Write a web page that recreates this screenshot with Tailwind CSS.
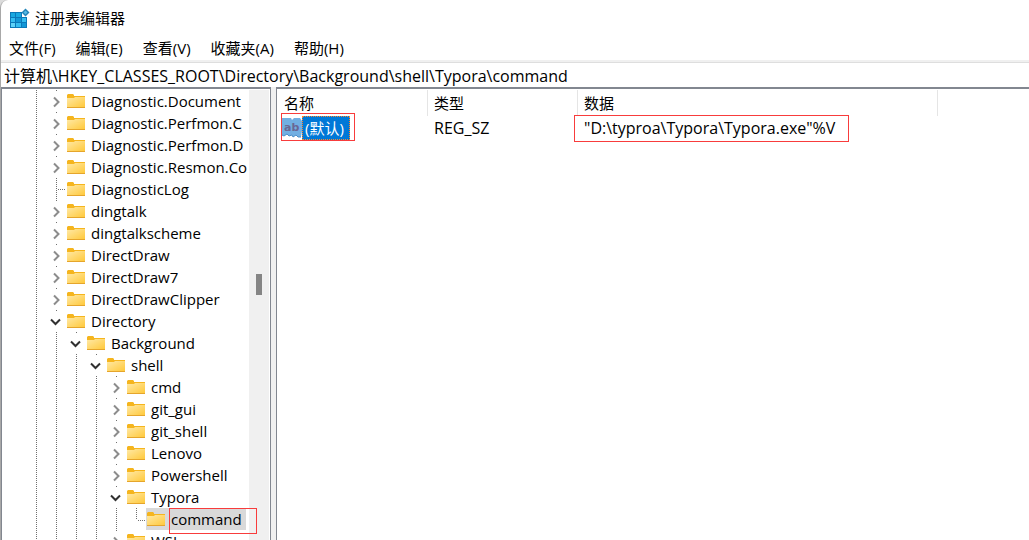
<!DOCTYPE html>
<html lang="zh-CN">

<head>
    <meta charset="UTF-8">
    <meta name="viewport" content="width=device-width, initial-scale=1.0">
    <title>注册表编辑器</title>
    <script src="https://cdn.jsdelivr.net/npm/@tailwindcss/browser@4"></script>
</head>

<body class="h-screen overflow-hidden bg-[#dcdcdc] font-['Open_Sans','Noto_Sans_CJK_SC',sans-serif] text-[15px] text-black">
    <div class="flex h-full flex-col rounded-tl-lg border-l border-[#a8a8a8] bg-white">
        <header class="flex h-9 shrink-0 items-center gap-[5px] pl-2">
            <svg class="size-[21px]" viewBox="0 0 21 21" aria-hidden="true">
                <rect x="1" y="4" width="17" height="16" fill="#0b78b8" />
                <path d="M2 5h4v4H2zM7 5h5v4H7z" fill="#18a8e0" />
                <path d="M2 10h4v4H2zM13 10h4v4h-4zM7 15h5v4H7z" fill="#35bdf0" />
                <path d="M7 10h5v4H7zM13 15h4v4h-4z" fill="#1296d6" />
                <path d="M2 15h4v4H2z" fill="#5fd2f7" />
                <path d="M13 3h6v6h-6z" fill="#fff" />
                <path d="M16.500 .5l4 4-4 4-4-4z" fill="#2384b8" />
                <path d="M16.500 2.500l2 2-2 2-2-2z" fill="#55b9e4" />
            </svg>
            <h1>注册表编辑器</h1>
        </header>

        <nav class="flex h-6 shrink-0 items-center gap-5 pt-px pl-2">
            <button type="button">文件(F)</button>
            <button type="button">编辑(E)</button>
            <button type="button">查看(V)</button>
            <button type="button">收藏夹(A)</button>
            <button type="button">帮助(H)</button>
        </nav>

        <div class="shrink-0 border-t-2 border-[#f0f0f0]">
            <input type="text" aria-label="地址" value="计算机\HKEY_CLASSES_ROOT\Directory\Background\shell\Typora\command"
                class="block h-[25px] w-full border-t border-[#dedede] pb-px pl-[3px] text-base outline-none">
        </div>

        <main class="flex min-h-0 flex-1 bg-[#f0f0f0]">
            <section class="relative flex w-[270px] shrink-0 border-x border-t-2 border-[#828790] bg-white pt-px">
                <ul id="tree" class="min-w-0 flex-1 overflow-hidden pl-6"></ul>
                <!-- scrollbar -->
                <div class="mr-px w-5 shrink-0 bg-[#f0f0f0] px-[7px] pt-[184px]">
                    <div class="h-[21px] bg-[#858585]"></div>
                </div>
                <div class="absolute top-[419px] left-[167px] h-[26px] w-[88px] border border-[#f83c3c]"></div>
            </section>

            <section class="ml-[5px] min-w-0 flex-1 border-t-2 border-l border-[#828790] bg-white pt-px">
                <table class="w-full table-fixed border-separate border-spacing-0 text-left">
                    <colgroup>
                        <col class="w-[151px]">
                        <col class="w-[150px]">
                        <col class="w-[360px]">
                        <col>
                    </colgroup>
                    <thead>
                        <tr class="h-[26px]">
                            <th class="border-r border-[#e5e5e5] p-0 pl-[7px] font-normal">名称</th>
                            <th class="border-r border-[#e5e5e5] p-0 pl-[6px] font-normal">类型</th>
                            <th class="border-r border-[#e5e5e5] p-0 pl-[6px] font-normal">数据</th>
                            <th></th>
                        </tr>
                    </thead>
                    <tbody>
                        <tr class="h-6">
                            <td class="p-0 pl-[5px]">
                                <div class="relative flex items-center">
                                    <svg class="size-5" viewBox="0 0 20 20" aria-hidden="true">
                                        <path d="M0 0h9l1 2 2-2h6l2 3v10l-1 6h-3l-2-2-3 2-1-2-3 1-2-2-3 2-2-1z" fill="#71afe2" />
                                        <path d="M0 17l2 1 3-2 2 2 3-1 1 2 3-2 2 2h3" fill="none" stroke="#4c8fc8" />
                                        <text x="2" y="13" font-family="DejaVu Sans" font-size="11" font-weight="bold" fill="#6a6694">ab</text>
                                    </svg>
                                    <span class="flex h-6 items-center border border-dotted border-[#ff8728] bg-[#0078d7] pr-[5px] pl-[2px] text-white">(默认)</span>
                                    <div class="absolute -top-[3px] -left-px h-[28px] w-[74px] border border-[#f83c3c]"></div>
                                </div>
                            </td>
                            <td class="p-0 pl-[6px] text-base">REG_SZ</td>
                            <td class="p-0 pl-[6px] text-base">
                                <div class="relative">
                                    "D:\typroa\Typora\Typora.exe"%V
                                    <div class="absolute -top-px -left-[10px] h-[27px] w-[275px] border border-[#f83c3c]"></div>
                                </div>
                            </td>
                            <td></td>
                        </tr>
                    </tbody>
                </table>
            </section>
        </main>
    </div>

    <script>
        // level = number of guide lines in front of the node's own cell
        const nodes = [
            { name: 'Diagnostic.Document', level: 1, state: 'closed' },
            { name: 'Diagnostic.Perfmon.C', level: 1, state: 'closed' },
            { name: 'Diagnostic.Perfmon.D', level: 1, state: 'closed' },
            { name: 'Diagnostic.Resmon.Co', level: 1, state: 'closed' },
            { name: 'DiagnosticLog', level: 1, state: 'leaf' },
            { name: 'dingtalk', level: 1, state: 'closed' },
            { name: 'dingtalkscheme', level: 1, state: 'closed' },
            { name: 'DirectDraw', level: 1, state: 'closed' },
            { name: 'DirectDraw7', level: 1, state: 'closed' },
            { name: 'DirectDrawClipper', level: 1, state: 'closed' },
            { name: 'Directory', level: 1, state: 'open' },
            { name: 'Background', level: 2, state: 'open' },
            { name: 'shell', level: 3, state: 'open' },
            { name: 'cmd', level: 4, state: 'closed' },
            { name: 'git_gui', level: 4, state: 'closed' },
            { name: 'git_shell', level: 4, state: 'closed' },
            { name: 'Lenovo', level: 4, state: 'closed' },
            { name: 'Powershell', level: 4, state: 'closed' },
            { name: 'Typora', level: 4, state: 'open' },
            { name: 'command', level: 5, state: 'last', selected: true },
            { name: 'WSL', level: 4, state: 'closed' },
        ];

        const guide = '<span class="flex h-full w-5 shrink-0 pl-[10px]"><span class="h-full w-px bg-[linear-gradient(#707070_50%,transparent_50%)] bg-[length:1px_2px]"></span></span>';

        const cells = {
            closed: `<button type="button" aria-label="展开" class="flex h-full w-5 shrink-0 flex-col pl-[2px]">
                    <span class="ml-2 h-px w-px bg-[#707070]"></span>
                    <svg class="h-5 w-4" viewBox="0 0 16 20"><path d="M6 6.500l4.500 4.500-4.500 4.500" fill="none" stroke="#8c8c8c" stroke-width="2" /></svg>
                </button>`,
            open: `<button type="button" aria-label="折叠" class="flex h-full w-5 shrink-0 flex-col pl-[2px]">
                    <span class="ml-2 h-px w-px bg-[#707070]"></span>
                    <svg class="h-5 w-4" viewBox="0 0 16 20"><path d="M3 8.500l4.500 4.500 4.500-4.500" fill="none" stroke="#303030" stroke-width="2" /></svg>
                </button>`,
            leaf: `<span class="flex h-full w-5 shrink-0 items-center pl-[10px]">
                    <span class="h-full w-px bg-[linear-gradient(#707070_50%,transparent_50%)] bg-[length:1px_2px]"></span>
                    <span class="ml-px h-px flex-1 bg-[linear-gradient(90deg,#707070_50%,transparent_50%)] bg-[length:2px_1px]"></span>
                </span>`,
            last: `<span class="flex h-full w-5 shrink-0 pl-[10px]">
                    <span class="h-3 w-px bg-[linear-gradient(#707070_50%,transparent_50%)] bg-[length:1px_2px]"></span>
                    <span class="mt-3 ml-px h-px flex-1 bg-[linear-gradient(90deg,#707070_50%,transparent_50%)] bg-[length:2px_1px]"></span>
                </span>`,
        };

        const folder = `<svg class="h-[14px] w-[18px] shrink-0" viewBox="0 0 18 14" aria-hidden="true">
                <path d="M0 1l1-1h5l1 1v1h11v11H0z" fill="#f5b51e" />
                <path d="M0 4h7l1-1h10v10H0z" fill="url(#folderFill)" />
                <path d="M0 13.500h18" stroke="#e5a52c" />
            </svg>`;

        document.getElementById('tree').innerHTML = `
            <svg class="absolute size-0"><defs><linearGradient id="folderFill" x1="0" y1="0" x2="1" y2="1">
                <stop offset="0" stop-color="#ffe9a6" /><stop offset="1" stop-color="#ffc93c" />
            </linearGradient></defs></svg>` +
            nodes.map(node => `
            <li class="flex h-[22px] items-center whitespace-nowrap">
                ${guide.repeat(node.level)}${cells[node.state]}
                <span class="${node.selected ? 'flex h-full items-center gap-[6px] bg-[#d9d9d9] pr-1 pl-px' : 'flex h-full items-center gap-[6px] pl-px'}">${folder}<span>${node.name}</span></span>
            </li>`).join('');
    </script>
</body>

</html>
